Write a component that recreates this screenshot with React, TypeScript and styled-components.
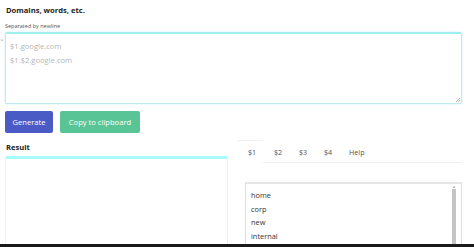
import React from "react";
import styled, { createGlobalStyle } from "styled-components";

const Global = createGlobalStyle`
  *, *::before, *::after { box-sizing: border-box; }
  html, body { margin: 0; padding: 0; background: #fff; }
  body { font-family: "Open Sans", "Noto Sans", sans-serif; color: #212529; overflow: hidden; }
`;

const Page = styled.div`
  width: 474px;
  height: 247px;
  display: flex;
  flex-direction: column;
  overflow: hidden;
`;

const Content = styled.div`
  flex: 1;
  display: flex;
  flex-direction: column;
  padding: 4px 12px 0 5px;
  min-height: 0;
  position: relative;
`;

const Title = styled.div`
  font-size: 7.6px;
  font-weight: 700;
  line-height: 12px;
  padding-left: 1px;
  color: #222;
`;

const Hint = styled.div`
  margin-top: 6px;
  font-size: 5.5px;
  line-height: 8px;
  color: #555;
`;

const Marker = styled.span`
  position: absolute;
  left: 0;
  top: 36px;
  font-size: 6px;
  color: #888;
`;

const Input = styled.div`
  height: 72px;
  margin-top: 2px;
  border: 1px solid #bfe9ea;
  border-top: 2px solid #9feff0;
  border-radius: 2px;
  box-shadow: 0 0 2px rgba(120, 230, 235, 0.5);
  padding: 5px 0 0 4px;
  font-size: 7.6px;
  line-height: 14px;
  color: #b5b5b5;
  position: relative;
`;

const Grip = styled.svg`
  position: absolute;
  right: 1px;
  bottom: 1px;
`;

const ButtonRow = styled.div`
  display: flex;
  gap: 7px;
  margin-top: 7px;
`;

const Button = styled.div<{ $tone: "blue" | "green"; $w: number }>`
  width: ${(p) => p.$w}px;
  height: 22px;
  border-radius: 2px;
  display: flex;
  align-items: center;
  justify-content: center;
  font-size: 7.6px;
  color: #fff;
  background: ${(p) => (p.$tone === "blue" ? "#4a5bc6" : "#4cc08d")};
  opacity: ${(p) => (p.$tone === "green" ? 0.92 : 1)};
`;

const Bottom = styled.div`
  flex: 1;
  display: grid;
  grid-template-columns: 223px 225px;
  column-gap: 9px;
  margin-top: 7px;
  min-height: 0;
`;

const Col = styled.div`
  display: flex;
  flex-direction: column;
  min-height: 0;
`;

const Label = styled.div`
  font-size: 7.6px;
  font-weight: 700;
  line-height: 10px;
  padding-left: 1px;
  margin-top: 2px;
  color: #222;
`;

const ResultBox = styled.div`
  flex: 1;
  margin-top: 4px;
  border-top: 3px solid #a9fbfb;
  border-right: 1px solid #eee;
  border-left: 1px solid #f2f2f2;
  border-radius: 2px 2px 0 0;
`;

const Tabs = styled.div`
  display: flex;
  height: 23px;
  align-items: stretch;
`;

const Tab = styled.div<{ $active?: boolean }>`
  width: ${(p) => (p.$active ? 26 : 25)}px;
  display: flex;
  align-items: center;
  padding-left: 11px;
  font-size: 7.2px;
  color: #555;
  border-top: 1px solid ${(p) => (p.$active ? "#f0f0f0" : "transparent")};
  border-bottom: 1px solid ${(p) => (p.$active ? "transparent" : "#f0f0f0")};
`;

const TabFill = styled.div`
  flex: 1;
  border-bottom: 1px solid #f0f0f0;
`;

const List = styled.div`
  flex: 1;
  margin: 19px 0 0 8px;
  border: 1px solid #ddd;
  border-top: 2px solid #e6e6e6;
  border-bottom: none;
  display: flex;
  min-height: 0;
`;

const Items = styled.div`
  flex: 1;
  padding: 5px 0 0 5px;
  font-size: 7.4px;
  line-height: 13.5px;
  color: #333;
`;

const Scroll = styled.div`
  width: 6px;
  margin-right: 4px;
  display: flex;
  flex-direction: column;
  align-items: center;
`;

const ScrollArrow = styled.div`
  font-size: 4px;
  color: #aaa;
  line-height: 5px;
`;

const ScrollThumb = styled.div`
  flex: 1;
  width: 4px;
  background: #c4c4c4;
`;

const Bar = styled.div`
  height: 3px;
  background: #1a1a1a;
`;

export default function App() {
  return (
    <Page>
      <Global />
      <Content>
        <Title>Domains, words, etc.</Title>
        <Hint>Separated by newline</Hint>
        <Marker>&gt;</Marker>
        <Input>
          <div>$1.google.com</div>
          <div>$1.$2.google.com</div>
          <Grip width="4" height="4" viewBox="0 0 4 4">
            <path d="M4 0 L0 4 M4 2 L2 4" stroke="#999" strokeWidth="0.7" />
          </Grip>
        </Input>
        <ButtonRow>
          <Button $tone="blue" $w={48}>Generate</Button>
          <Button $tone="green" $w={80}>Copy to clipboard</Button>
        </ButtonRow>
        <Bottom>
          <Col>
            <Label>Result</Label>
            <ResultBox />
          </Col>
          <Col>
            <Tabs>
              <Tab $active>$1</Tab>
              <Tab>$2</Tab>
              <Tab>$3</Tab>
              <Tab>$4</Tab>
              <Tab>Help</Tab>
              <TabFill />
            </Tabs>
            <List>
              <Items>
                <div>home</div>
                <div>corp</div>
                <div>new</div>
                <div>internal</div>
              </Items>
              <Scroll>
                <ScrollArrow>▲</ScrollArrow>
                <ScrollThumb />
              </Scroll>
            </List>
          </Col>
        </Bottom>
      </Content>
      <Bar />
    </Page>
  );
}
